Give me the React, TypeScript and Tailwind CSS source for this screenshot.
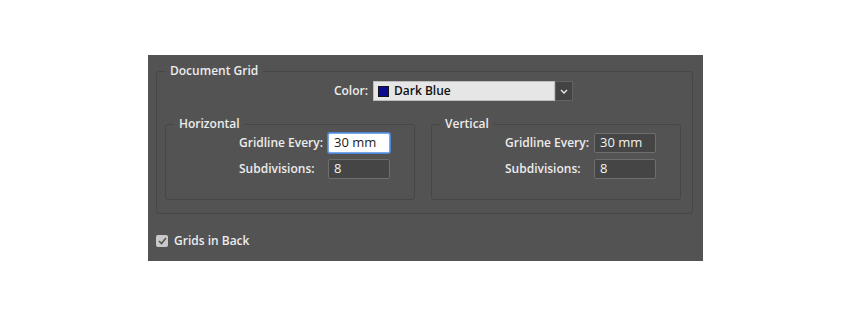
import React from "react";

const font = { fontFamily: '"Open Sans", "Liberation Sans", sans-serif' };

function Field({ label, value, focused }: { label: string; value: string; focused?: boolean }) {
  return (
    <div className="flex items-center">
      <div className="w-[162px] pl-[73px] text-left text-[12px] font-semibold text-[#ececec]">{label}</div>
      <div
        className={
          focused
            ? "w-[62px] h-[20px] bg-white border border-[#7aa7e6] rounded-[2px] flex items-center pl-[5px] text-[13px] text-[#1a1a1a] shadow-[0_0_0_1px_#4d86d6]"
            : "w-[62px] h-[20px] bg-[#454545] border border-[#6e6e6e] rounded-[2px] flex items-center pl-[5px] text-[13px] text-[#f2f2f2]"
        }
      >
        {value}
      </div>
    </div>
  );
}

function Group({ title, focused }: { title: string; focused?: boolean }) {
  return (
    <fieldset className="w-[250px] h-[84px] border border-[#464646] rounded-[3px]">
      <legend className="ml-[8px] px-[5px] text-[12px] font-semibold text-[#ececec] leading-[16px]">{title}</legend>
      <div className="flex flex-col gap-[6px] pt-[1px]">
        <Field label="Gridline Every:" value="30 mm" focused={focused} />
        <Field label="Subdivisions:" value="8" />
      </div>
    </fieldset>
  );
}

export default function App() {
  return (
    <div className="w-[850px] h-[315px] bg-white pt-[55px] pl-[148px]" style={font}>
      <div className="w-[555px] h-[206px] bg-[#535353] pt-[8px] px-[8px] flex flex-col">
        <fieldset className="w-[537px] h-[151px] border border-[#464646] rounded-[3px]">
          <legend className="ml-[8px] px-[5px] text-[12px] font-semibold text-[#ececec] leading-[16px]">Document Grid</legend>
          <div className="flex items-center pt-[2px]">
            <div className="w-[216px] pr-[5px] text-right text-[12px] font-semibold text-[#ececec]">Color:</div>
            <div className="w-[182px] h-[20px] bg-[#e6e6e6] border border-[#bdbdbd] flex items-center pl-[4px] gap-[5px]">
              <div className="w-[11px] h-[11px] bg-[#0c0c90] border border-[#151515]" />
              <span className="text-[12px] font-semibold text-[#111]">Dark Blue</span>
            </div>
            <div className="w-[18px] h-[20px] bg-[#434343] border border-[#626262] flex items-center justify-center">
              <svg width="8" height="5" viewBox="0 0 8 5">
                <path d="M1 1 L4 4 L7 1" stroke="#e8e8e8" strokeWidth="1.4" fill="none" />
              </svg>
            </div>
          </div>
          <div className="flex gap-[16px] pl-[8px] pt-[15px]">
            <Group title="Horizontal" focused />
            <Group title="Vertical" />
          </div>
        </fieldset>
        <div className="flex items-center gap-[6px] mt-[18px]">
          <div className="w-[12px] h-[12px] bg-[#c9c9c9] rounded-[2px] flex items-center justify-center">
            <svg width="9" height="8" viewBox="0 0 9 8">
              <path d="M1 4 L3.5 6.5 L8 1" stroke="#555" strokeWidth="1.6" fill="none" />
            </svg>
          </div>
          <span className="text-[12px] font-semibold text-[#ececec]">Grids in Back</span>
        </div>
      </div>
    </div>
  );
}
